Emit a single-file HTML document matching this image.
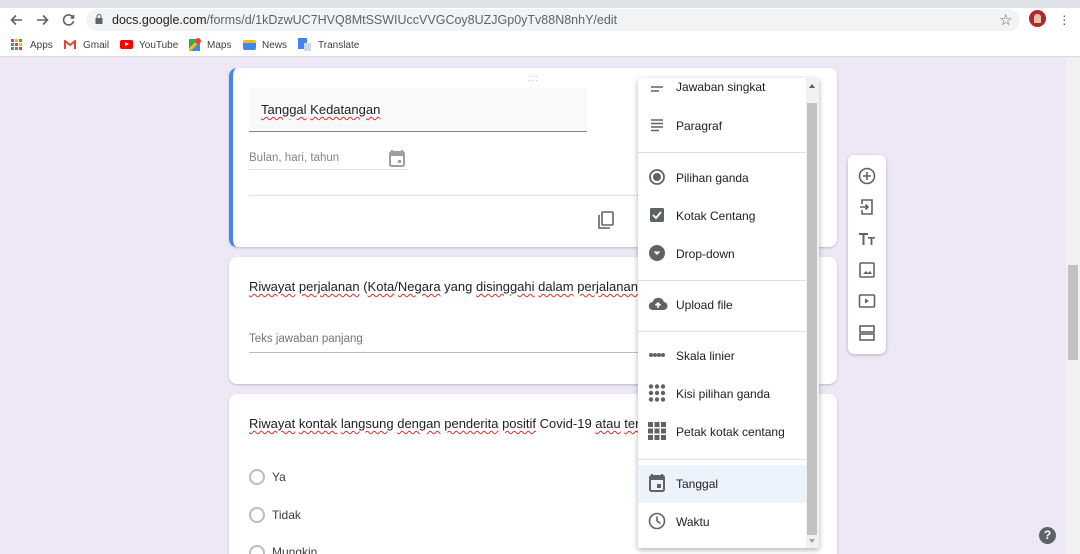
<!DOCTYPE html>
<html style="overflow:hidden;width:1080px;height:554px"><head><meta charset="utf-8"><style>
*{box-sizing:border-box;margin:0;padding:0}
body{width:1080px;height:554px;overflow:hidden;background:#ede7f6;font-family:"Liberation Sans",Arial,sans-serif;position:relative;color:#202124}
.abs{position:absolute}
.tabs{left:0;top:0;width:1080px;height:8px;background:#dee1e6}
.tool{left:0;top:8px;width:1080px;height:25px;background:#fff}
.omni{left:86px;top:9px;width:934px;height:22px;border-radius:11px;background:#f1f3f4;font-size:12.5px;line-height:22px;padding-left:26px;color:#5f6368}
.omni b{font-weight:normal;color:#202124}
.bm{left:0;top:33px;width:1080px;height:24px;background:#fff;border-bottom:1px solid #dadce0;font-size:10px;color:#3c4043}
.bm span{position:absolute;top:7px}
.card{background:#fff;border-radius:8px;box-shadow:0 1px 2px rgba(0,0,0,.2)}
.sp{text-decoration-line:underline;text-decoration-style:wavy;text-decoration-color:#d93025;text-decoration-thickness:1px;text-underline-offset:2px}
.menu{left:638px;top:78px;width:181px;height:470px;background:#fff;box-shadow:0 2px 6px rgba(0,0,0,.3);border-radius:2px;overflow:hidden}
.it{position:absolute;left:0;width:168px;height:38px;font-size:12px;color:#202124}
.it .t{position:absolute;left:38px;top:12px}
.it svg{position:absolute;left:10px;top:9px}
.sep{position:absolute;left:0;width:168px;height:1px;background:#e0e0e0}
.side{left:848px;top:155px;width:38px;height:199px;background:#fff;border-radius:6px;box-shadow:0 1px 3px rgba(0,0,0,.25)}
.side svg{position:absolute;left:10px}
</style></head><body>
<div class="abs tabs"></div>
<div class="abs tool"></div>
<svg class="abs" style="left:10px;top:13px" width="70" height="14" viewBox="0 0 70 14" fill="none" stroke="#5f6368" stroke-width="1.6">
<path d="M12 7H2M6 2.5L1.5 7 6 11.5"/><path d="M27 7H37M33 2.5L37.5 7 33 11.5"/><path d="M63 4.5A5 5 0 1 0 63.5 8"/><path d="M63.5 2v3h-3" fill="#5f6368"/></svg>
<div class="abs omni"><b>docs.google.com</b>/forms/d/1kDzwUC7HVQ8MtSSWIUccVVGCoy8UZJGp0yTv88N8nhY/edit</div>
<svg class="abs" style="left:95px;top:14px" width="8" height="10"><rect x="0.5" y="4" width="7" height="6" fill="#5f6368"/><path d="M2 4V2.5a2 2 0 0 1 4 0V4" stroke="#5f6368" fill="none"/></svg>
<div class="abs" style="left:999px;top:11px;font-size:15px;color:#5f6368">☆</div>
<div class="abs" style="left:1029px;top:10px;width:17px;height:17px;border-radius:50%;background:#b3262c"><div style="margin:4px auto 0;width:7px;height:9px;border-radius:3px 3px 0 0;background:#e3c2a6"></div></div>
<div class="abs" style="left:1062px;top:13px;width:3px;height:14px;color:#5f6368;font-size:14px;line-height:4px">·<br>·<br>·</div>
<div class="abs bm">
<svg style="position:absolute;left:11px;top:6px" width="11" height="11"><g fill="#4285f4"><rect x="0" y="0" width="3" height="3" fill="#ea4335"/><rect x="4" y="0" width="3" height="3" fill="#fbbc05"/><rect x="8" y="0" width="3" height="3" fill="#34a853"/><rect x="0" y="4" width="3" height="3"/><rect x="4" y="4" width="3" height="3" fill="#ea4335"/><rect x="8" y="4" width="3" height="3" fill="#fbbc05"/><rect x="0" y="8" width="3" height="3" fill="#34a853"/><rect x="4" y="8" width="3" height="3"/><rect x="8" y="8" width="3" height="3" fill="#ea4335"/></g></svg>
<span style="left:30px">Apps</span>
<svg style="position:absolute;left:64px;top:7px" width="12" height="9"><path d="M1 9V1l5 4 5-4v8" stroke="#ea4335" stroke-width="2" fill="none"/></svg>
<span style="left:83px">Gmail</span>
<div style="position:absolute;left:120px;top:7px;width:13px;height:9px;background:#f00;border-radius:2px"></div><div style="position:absolute;left:125px;top:9px;border-left:4px solid #fff;border-top:2.5px solid transparent;border-bottom:2.5px solid transparent"></div>
<span style="left:139px">YouTube</span>
<div style="position:absolute;left:189px;top:6px;width:11px;height:12px;background:linear-gradient(135deg,#34a853 40%,#fbbc05 40%,#fbbc05 60%,#4285f4 60%)"></div><div style="position:absolute;left:195px;top:5px;width:6px;height:6px;border-radius:50%;background:#ea4335"></div>
<span style="left:207px">Maps</span>
<div style="position:absolute;left:243px;top:7px;width:13px;height:10px;background:#4285f4;border-radius:2px;border-top:3px solid #fbbc05"></div>
<span style="left:262px">News</span>
<div style="position:absolute;left:298px;top:5px;width:9px;height:11px;background:#4285f4"></div><div style="position:absolute;left:304px;top:10px;width:7px;height:8px;background:#cfd8e6"></div>
<span style="left:318px">Translate</span>
</div>

<div class="abs card" style="left:229px;top:68px;width:608px;height:179px;border-left:4px solid #4285f4"></div>
<div class="abs" style="left:528px;top:75px;color:#9aa0a6;font-size:8px;letter-spacing:1px;line-height:4px">···<br>···</div>
<div class="abs" style="left:249px;top:88px;width:338px;height:44px;background:#f8f9fa;border-bottom:1px solid #80868b;font-size:13px;padding:14px 0 0 12px"><span class="sp">Tanggal</span> <span class="sp">Kedatangan</span></div>
<div class="abs" style="left:249px;top:152px;width:158px;height:18px;border-bottom:1px solid #e0e0e0;font-size:11.5px;color:#80868b">Bulan, hari, tahun</div>
<svg class="abs" style="left:389px;top:150px" width="16" height="17" viewBox="0 0 16 17"><path d="M3 0v2M13 0v2" stroke="#9aa0a6" stroke-width="2"/><rect x="1" y="2" width="14" height="14" rx="1.5" fill="none" stroke="#9aa0a6" stroke-width="2"/><rect x="1" y="2" width="14" height="4" fill="#9aa0a6"/><rect x="9" y="10" width="3" height="3" fill="#9aa0a6"/></svg>
<div class="abs" style="left:249px;top:195px;width:390px;height:1px;background:#e0e0e0"></div>
<svg class="abs" style="left:598px;top:211px" width="16" height="18" viewBox="0 0 16 18" fill="none" stroke="#5f6368" stroke-width="1.6"><path d="M1 4v13h11"/><rect x="4" y="1" width="11" height="13" rx="1"/></svg>

<div class="abs card" style="left:229px;top:257px;width:608px;height:127px"></div>
<div class="abs" style="left:249px;top:279px;font-size:13px;white-space:nowrap;width:389px;overflow:hidden;height:20px"><span class="sp">Riwayat</span> <span class="sp">perjalanan</span> (<span class="sp">Kota</span>/<span class="sp">Negara</span> yang <span class="sp">disinggahi</span> <span class="sp">dalam</span> <span class="sp">perjalanan</span> <span class="sp">p</span></div>
<div class="abs" style="left:249px;top:333px;width:390px;height:20px;border-bottom:1px solid #bdbdbd;font-size:11.5px;color:#70757a">Teks jawaban panjang</div>

<div class="abs card" style="left:229px;top:394px;width:608px;height:160px;border-radius:8px 8px 0 0"></div>
<div class="abs" style="left:249px;top:416px;font-size:13px;white-space:nowrap;width:389px;overflow:hidden;height:20px"><span class="sp">Riwayat</span> <span class="sp">kontak</span> <span class="sp">langsung</span> <span class="sp">dengan</span> <span class="sp">penderita</span> <span class="sp">positif</span> Covid-19 <span class="sp">atau</span> <span class="sp">ter</span></div>
<div class="abs" style="left:249px;top:469px;width:16px;height:16px;border:2px solid #bdbdbd;border-radius:50%"></div><div class="abs" style="left:272px;top:470px;font-size:12px;color:#3c4043">Ya</div>
<div class="abs" style="left:249px;top:507px;width:16px;height:16px;border:2px solid #bdbdbd;border-radius:50%"></div><div class="abs" style="left:272px;top:508px;font-size:12px;color:#3c4043">Tidak</div>
<div class="abs" style="left:249px;top:545px;width:16px;height:16px;border:2px solid #bdbdbd;border-radius:50%"></div><div class="abs" style="left:272px;top:545px;font-size:12px;color:#3c4043">Mungkin</div>

<div class="abs menu">
<div class="it" style="top:-1px"><svg width="18" height="18" style="top:3px"><path d="M3 7h12M3 11h8" stroke="#5f6368" stroke-width="1.6"/></svg><span class="t" style="top:3px">Jawaban singkat</span></div>
<div class="it" style="top:29px"><svg width="18" height="18"><path d="M3 4h12M3 7.5h12M3 11h12M3 14.5h8" stroke="#5f6368" stroke-width="1.5"/></svg><span class="t">Paragraf</span></div>
<div class="sep" style="top:74px"></div>
<div class="it" style="top:81px"><svg width="18" height="18"><circle cx="9" cy="9" r="7" fill="none" stroke="#5f6368" stroke-width="1.8"/><circle cx="9" cy="9" r="4" fill="#5f6368"/></svg><span class="t">Pilihan ganda</span></div>
<div class="it" style="top:119px"><svg width="18" height="18"><rect x="2" y="2" width="14" height="14" rx="1.5" fill="#5f6368"/><path d="M5 9l3 3 5-6" stroke="#fff" stroke-width="1.8" fill="none"/></svg><span class="t">Kotak Centang</span></div>
<div class="it" style="top:157px"><svg width="18" height="18"><circle cx="9" cy="9" r="8" fill="#5f6368"/><path d="M5.5 7.5h7L9 11z" fill="#fff"/></svg><span class="t">Drop-down</span></div>
<div class="sep" style="top:202px"></div>
<div class="it" style="top:208px"><svg width="20" height="18"><path d="M5 15a4 4 0 0 1-.5-8A6 6 0 0 1 16 7a4 4 0 0 1-1 8z" fill="#5f6368"/><path d="M10 13V8M7.5 10.5L10 8l2.5 2.5" stroke="#fff" stroke-width="1.6" fill="none"/></svg><span class="t">Upload file</span></div>
<div class="sep" style="top:253px"></div>
<div class="it" style="top:259px"><svg width="18" height="18"><path d="M2 9h14" stroke="#5f6368" stroke-width="1.2"/><circle cx="3" cy="9" r="2" fill="#5f6368"/><circle cx="7" cy="9" r="2" fill="#5f6368"/><circle cx="11" cy="9" r="2" fill="#5f6368"/><circle cx="15" cy="9" r="2" fill="#5f6368"/></svg><span class="t">Skala linier</span></div>
<div class="it" style="top:297px"><svg width="18" height="18" fill="#5f6368"><circle cx="3" cy="2.5" r="2.2"/><circle cx="9" cy="2.5" r="2.2"/><circle cx="15" cy="2.5" r="2.2"/><circle cx="3" cy="9" r="2.2"/><circle cx="9" cy="9" r="2.2"/><circle cx="15" cy="9" r="2.2"/><circle cx="3" cy="15.5" r="2.2"/><circle cx="9" cy="15.5" r="2.2"/><circle cx="15" cy="15.5" r="2.2"/></svg><span class="t">Kisi pilihan ganda</span></div>
<div class="it" style="top:335px"><svg width="18" height="18" fill="#5f6368"><rect x="0" y="0" width="5" height="5"/><rect x="6.5" y="0" width="5" height="5"/><rect x="13" y="0" width="5" height="5"/><rect x="0" y="6.5" width="5" height="5"/><rect x="6.5" y="6.5" width="5" height="5"/><rect x="13" y="6.5" width="5" height="5"/><rect x="0" y="13" width="5" height="5"/><rect x="6.5" y="13" width="5" height="5"/><rect x="13" y="13" width="5" height="5"/></svg><span class="t">Petak kotak centang</span></div>
<div class="sep" style="top:381px"></div>
<div class="it" style="top:387px;background:#ecf3fd"><svg width="18" height="18"><path d="M4 0v3M14 0v3" stroke="#5f6368" stroke-width="2"/><rect x="2" y="2" width="14" height="15" rx="1.5" fill="none" stroke="#5f6368" stroke-width="2"/><rect x="2" y="2" width="14" height="4" fill="#5f6368"/><rect x="9" y="10" width="4" height="4" fill="#5f6368"/></svg><span class="t">Tanggal</span></div>
<div class="it" style="top:425px"><svg width="18" height="18"><circle cx="9" cy="9" r="7.5" fill="none" stroke="#5f6368" stroke-width="1.6"/><path d="M9 4.5V9l3.5 2.5" stroke="#5f6368" stroke-width="1.6" fill="none"/></svg><span class="t">Waktu</span></div>
<div style="position:absolute;left:168px;top:0;width:13px;height:470px;background:#f1f1f1"></div>
<div style="position:absolute;left:169px;top:25px;width:10px;height:432px;background:#c1c1c1"></div>
<div style="position:absolute;left:171px;top:6px;border-bottom:4px solid #606060;border-left:3px solid transparent;border-right:3px solid transparent"></div>
<div style="position:absolute;left:171px;top:461px;border-top:4px solid #a0a0a0;border-left:3px solid transparent;border-right:3px solid transparent"></div>
</div>

<div class="abs side">
<svg style="top:12px" width="18" height="18" fill="none" stroke="#5f6368" stroke-width="1.6"><circle cx="9" cy="9" r="7.5"/><path d="M9 5v8M5 9h8"/></svg>
<svg style="top:43px" width="18" height="18" fill="none" stroke="#5f6368" stroke-width="1.6"><path d="M4 6V2h10v14H4v-4"/><path d="M2 9h8M7.5 6.5L10 9l-2.5 2.5"/></svg>
<svg style="top:75px" width="18" height="18" fill="#5f6368"><path d="M1 3h9v2H6.5v10h-2V5H1z"/><path d="M10 7h7v1.6h-2.6V15h-1.8V8.6H10z"/></svg>
<svg style="top:106px" width="18" height="18" fill="none" stroke="#5f6368" stroke-width="1.6"><rect x="2" y="2" width="14" height="14" rx="1"/><path d="M5 13l3-3 2 2 2-2 2 3z" fill="#5f6368" stroke="none"/></svg>
<svg style="top:137px" width="18" height="18" fill="none" stroke="#5f6368" stroke-width="1.6"><rect x="1.5" y="3" width="15" height="12" rx="1"/><path d="M7 6.5v5l4-2.5z" fill="#5f6368" stroke="none"/></svg>
<svg style="top:169px" width="18" height="18" fill="none" stroke="#5f6368" stroke-width="1.6"><rect x="2" y="2" width="14" height="6"/><rect x="2" y="10" width="14" height="6"/></svg>
</div>

<div class="abs" style="left:1066px;top:58px;width:14px;height:496px;background:#f1f1f1"></div>
<div class="abs" style="left:1068px;top:265px;width:10px;height:95px;background:#c1c1c1"></div>
<div class="abs" style="left:1039px;top:527px;width:17px;height:17px;border-radius:50%;background:#5f6368;color:#fff;font-size:12px;font-weight:bold;text-align:center;line-height:17px">?</div>
</body></html>
